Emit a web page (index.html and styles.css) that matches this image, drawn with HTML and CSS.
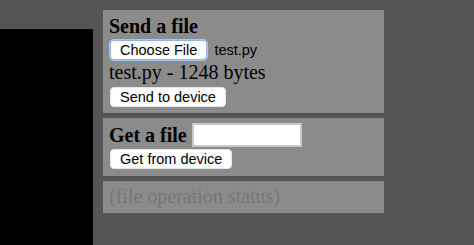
FILE: index.html
```html
<!DOCTYPE html>
<html lang="en">

<head>
    <meta charset="UTF-8">
    <meta name="viewport" content="width=device-width, initial-scale=1.0">
    <title>File transfer</title>
    <link rel="stylesheet" href="styles.css">
</head>

<body>
    <div class="page">
        <!-- terminal -->
        <div class="term"></div>

        <div class="files">
            <div class="panel send">
                <h2>Send a file</h2>
                <div class="picker">
                    <button class="btn btn-focus">Choose File</button>
                    <span class="picked">test.py</span>
                </div>
                <div class="info">test.py - 1248 bytes</div>
                <div class="row">
                    <button class="btn">Send to device</button>
                </div>
            </div>

            <div class="panel get">
                <div class="get-head">
                    <h2>Get a file</h2>
                    <input type="text" class="name">
                </div>
                <div class="row">
                    <button class="btn">Get from device</button>
                </div>
            </div>

            <div class="panel status">(file operation status)</div>
        </div>
    </div>
</body>

</html>
```

FILE: styles.css
```css
html,
body {
    margin: 0;
    height: 100%;
    background-color: #555;
    overflow: hidden;
}

body {
    font-family: "Liberation Serif", "Times New Roman", serif;
    font-size: 20px;
    color: #000;
}

.page {
    display: flex;
    align-items: flex-start;
}

.term {
    width: 93px;
    height: 216px;
    margin-top: 29px;
    background-color: #000;
}

.files {
    display: flex;
    flex-direction: column;
    gap: 5px;
    width: 281px;
    margin: 10px 0 0 10px;
}

.panel {
    background-color: #8b8b8b;
    padding: 5px 6px;
    line-height: 23px;
}

.panel h2 {
    margin: 0;
    font-size: 20px;
    line-height: 23px;
}

.send {
    padding-bottom: 6px;
}

.picker {
    display: flex;
    align-items: center;
    gap: 7px;
    height: 20px;
    margin-top: 2px;
}

.picked {
    font-family: "Liberation Sans", Arial, sans-serif;
    font-size: 14.5px;
}

.info {
    margin-top: 1px;
}

.row {
    display: flex;
    height: 20px;
    margin-top: 3px;
}

.btn {
    box-sizing: border-box;
    height: 20px;
    margin: 0 0 0 1px;
    padding: 0 9px;
    font-family: "Liberation Sans", Arial, sans-serif;
    font-size: 14.5px;
    line-height: 18px;
    color: #000;
    background-color: #fff;
    border: 1px solid #e6e6e6;
    border-radius: 4px;
    outline: none;
}

/* 选中文件按钮带蓝色焦点框 */
.btn-focus {
    border-color: #8fb3e6;
    box-shadow: 0 0 0 1px #a9c6ef;
}

.get {
    padding-bottom: 7px;
}

.get-head {
    display: flex;
    align-items: center;
    gap: 5px;
    height: 24px;
}

.get .row {
    margin-top: 2px;
}

.name {
    box-sizing: border-box;
    width: 110px;
    height: 24px;
    margin: 0;
    padding: 0 4px;
    background-color: #fff;
    border: 2px solid #c9c9c9;
    border-radius: 0;
    outline: none;
}

.status {
    padding: 4px 6px 5px;
    color: #777;
}
```
